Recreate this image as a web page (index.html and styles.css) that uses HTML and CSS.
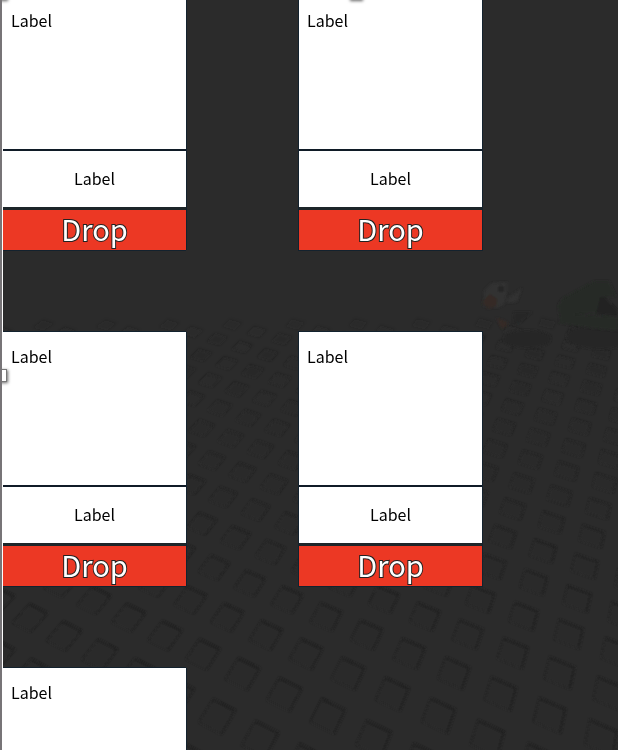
FILE: index.html
```html
<!DOCTYPE html>
<html lang="en">
<head>
  <meta charset="UTF-8">
  <title>Inventory</title>
  <link rel="stylesheet" href="styles.css">
</head>
<body>
  <svg class="scene" viewBox="0 0 618 750" preserveAspectRatio="xMinYMin slice" aria-hidden="true">
    <defs>
      <filter id="soft"><feGaussianBlur stdDeviation="1"/></filter>
    </defs>
    <g id="studs" filter="url(#soft)"></g>
    <g filter="url(#soft)" fill="#282828">
      <ellipse cx="527" cy="339" rx="24" ry="9"/>
      <ellipse cx="600" cy="337" rx="34" ry="12"/>
    </g>
    <g filter="url(#soft)">
      <path fill="#303030" d="M484 291l8-8 15-1v9l-2 13-8 4-14-2z"/>
      <path fill="#303030" d="M506 299l16-11-5 14-9 1z"/>
      <path fill="#252626" d="M498 287l5-1 1 5-5 1zM514 312l18 0-11 10-8 3z"/>
      <path fill="#342b27" d="M482 302l8-8 7 5-1 7-8 3zM496 318l7 2 6 4-7 5z"/>
      <path fill="#262b26" d="M558 305l4-6 33-18h14l7 15-12 1-8 16-37 2z"/>
      <path fill="#252925" d="M560 312l12 2 46 3v14l-28-3-31-5z"/>
      <path fill="#232424" d="M600 297l5 0 13 14v5l-22-2z"/>
    </g>
  </svg>

  <main class="inventory">
    <section class="card">
      <p class="name">Label</p>
      <p class="amount">Label</p>
      <button class="drop" type="button">Drop</button>
    </section>
    <section class="card">
      <p class="name">Label</p>
      <p class="amount">Label</p>
      <button class="drop" type="button">Drop</button>
    </section>
    <section class="card">
      <p class="name">Label</p>
      <p class="amount">Label</p>
      <button class="drop" type="button">Drop</button>
    </section>
    <section class="card">
      <p class="name">Label</p>
      <p class="amount">Label</p>
      <button class="drop" type="button">Drop</button>
    </section>
    <section class="card">
      <p class="name">Label</p>
    </section>
  </main>

  <span class="handle handle-corner"></span>
  <span class="handle handle-top"></span>
  <span class="handle handle-left"></span>

<script src="scene.js"></script>
</body>
</html>
```
FILE: styles.css
```css
body {
  margin: 0;
  height: 100vh;
  position: relative;
  overflow: hidden;
  box-sizing: border-box;
  background-color: #2b2b2b;
  border-left: 2px solid #777477;
  font-family: "Noto Sans CJK SC", "Noto Sans", sans-serif;
  color: #000;
}

.scene {
  position: absolute;
  top: 0;
  left: -2px;
  width: 100vw;
  height: 100%;
}

.inventory {
  position: relative;
  display: grid;
  grid-template-columns: 1fr 1fr;
  gap: 82px 113px;
  margin-top: -4px;
  padding-right: 136px;
  border-left: 1px solid #fff;
}

.card {
  display: flex;
  flex-direction: column;
  box-shadow: 1px 0 #13222e, 0 1px #13222e, 0 -1px #13222e;
  background-color: #1d2529;
}

.card:nth-child(even) {
  outline: 1px solid #13222e;
}

.name, .amount {
  margin: 0;
  background-color: #fff;
  font-size: 16px;
  line-height: 24px;
}

.name {
  height: 141px;
  padding: 12px 8px 0;
  border-bottom: 2px solid #101b27;
}

.amount {
  padding: 15px 0 17px;
  text-align: center;
}

.drop {
  height: 40px;
  margin: 3px 0 0;
  padding: 0 0 4px;
  border: 0;
  background-color: #ec3824;
  color: #fff;
  font-family: inherit;
  font-size: 29px;
  line-height: 36px;
  -webkit-text-stroke: 2px #222;
  paint-order: stroke fill;
  cursor: pointer;
}

.stud-side {
  fill: #222;
}

.stud-top {
  fill: #2c2c2c;
}

/* resize handles of the selected frame */
.handle {
  position: absolute;
  width: 11px;
  height: 11px;
  border: 1px solid #777;
  background-color: #fff;
  box-shadow: 1px 1px 3px rgba(0, 0, 0, 0.6);
}

.handle-corner {
  top: -13px;
  left: -8px;
}

.handle-top {
  top: -13px;
  left: 347px;
}

.handle-left {
  top: 369px;
  left: -8px;
}
```
FILE: scene.js
```js
// perspective projection of the baseplate grid
function project(i, j) {
  var w = 1 - 0.0246 * i + 0.049 * j;
  return [(549 + 36.7 * i + 37.4 * j) / w, (716 + 4.5 * i - 9.5 * j) / w];
}

function quad(i, j, r, dx, dy) {
  return [[-r, -r], [r, -r], [r, r], [-r, r]].map(function (c) {
    var p = project(i + c[0], j + c[1]);
    return (p[0] + dx).toFixed(1) + "," + (p[1] + dy).toFixed(1);
  }).join(" ");
}

function addPolygon(points, name, opacity) {
  var el = document.createElementNS("http://www.w3.org/2000/svg", "polygon");
  el.setAttribute("points", points);
  el.setAttribute("class", name);
  el.setAttribute("opacity", opacity);
  document.getElementById("studs").appendChild(el);
}

for (var j = 24; j > -9; j--) {
  for (var i = -34; i < 12; i++) {
    var p = project(i, j);
    if (p[0] < -20 || p[0] > 640 || p[1] < 320 || p[1] > 770) continue;
    // studs fade out towards the horizon
    var opacity = Math.max(0, Math.min(1, (p[1] - 310) / 280)).toFixed(2);
    addPolygon(quad(i, j, 0.27, 1, -1), "stud-side", opacity);
    addPolygon(quad(i, j, 0.24, 0, 0), "stud-top", Math.min(1, opacity * 3));
  }
}
```
